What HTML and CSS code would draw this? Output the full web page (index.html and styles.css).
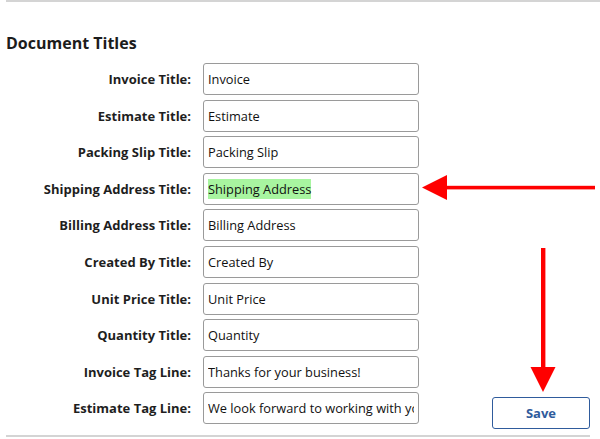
FILE: index.html
```html
<!DOCTYPE html>
<html lang="en">

<head>
    <meta charset="UTF-8">
    <meta name="viewport" content="width=device-width, initial-scale=1.0">
    <title>Document Titles</title>
    <link rel="stylesheet" href="styles.css">
</head>

<body>
    <div class="settings">
        <h2>Document Titles</h2>
        <div class="form-wrap">
            <div class="title-grid">
                <label for="invoice-title">Invoice Title:</label>
                <div class="field"><input type="text" id="invoice-title" value="Invoice"></div>

                <label for="estimate-title">Estimate Title:</label>
                <div class="field"><input type="text" id="estimate-title" value="Estimate"></div>

                <label for="packing-title">Packing Slip Title:</label>
                <div class="field"><input type="text" id="packing-title" value="Packing Slip"></div>

                <label for="shipping-title">Shipping Address Title:</label>
                <div class="field"><span class="selected">Shipping Address</span></div>

                <label for="billing-title">Billing Address Title:</label>
                <div class="field"><input type="text" id="billing-title" value="Billing Address"></div>

                <label for="created-title">Created By Title:</label>
                <div class="field"><input type="text" id="created-title" value="Created By"></div>

                <label for="price-title">Unit Price Title:</label>
                <div class="field"><input type="text" id="price-title" value="Unit Price"></div>

                <label for="qty-title">Quantity Title:</label>
                <div class="field"><input type="text" id="qty-title" value="Quantity"></div>

                <label for="invoice-tag">Invoice Tag Line:</label>
                <div class="field"><input type="text" id="invoice-tag" value="Thanks for your business!"></div>

                <label for="estimate-tag">Estimate Tag Line:</label>
                <div class="field"><input type="text" id="estimate-tag" value="We look forward to working with you!"></div>
            </div>
            <button class="save-btn">Save</button>
        </div>
    </div>

    <!-- annotation arrows -->
    <svg class="arrow arrow-left" width="180" height="30" viewBox="0 0 180 30">
        <polygon points="2,15.5 27,3 27,28" fill="#ff0000"/>
        <rect x="26" y="13.8" width="149" height="3.6" fill="#ff0000"/>
    </svg>
    <svg class="arrow arrow-down" width="30" height="146" viewBox="0 0 30 146">
        <rect x="13" y="0" width="4.4" height="121" fill="#ff0000"/>
        <polygon points="2.5,119 27.5,119 15,144" fill="#ff0000"/>
    </svg>
</body>

</html>
```

FILE: styles.css
```css
body {
    font-family: "Open Sans", Arial, sans-serif;
    margin: 0;
    padding: 0 0 0 6px;
    color: #222;
    background: #fff;
    position: relative;
}

.settings {
    border-top: 2px solid #d4d4d4;
}

h2 {
    font-size: 16px;
    font-weight: bold;
    margin: 0;
    padding-top: 30px;
    line-height: 22px;
    color: #1c1c1c;
}

.form-wrap {
    display: flex;
    justify-content: space-between;
    align-items: flex-end;
    margin-top: 9px;
    margin-right: 10px;
    padding-bottom: 6px;
    border-bottom: 2px solid #d4d4d4;
}

.title-grid {
    display: grid;
    grid-template-columns: 185px 216px;
    grid-auto-rows: 32px;
    column-gap: 12px;
    row-gap: 4.6px;
    padding-bottom: 5px;
}

.title-grid label {
    font-size: 13px;
    font-weight: bold;
    text-align: right;
    line-height: 32px;
    color: #1e1e1e;
}

.field,
.field input {
    box-sizing: border-box;
    height: 32px;
}

.field {
    border: 1px solid #9a9a9a;
    border-radius: 3px;
    padding: 0 4px;
    display: flex;
    align-items: center;
    overflow: hidden;
    white-space: nowrap;
    background: #fff;
}

.field input {
    border: none;
    outline: none;
    width: 100%;
    padding: 0;
    font-family: "Open Sans", Arial, sans-serif;
    font-size: 12.8px;
    color: #111;
    background: transparent;
}

.selected {
    font-size: 12.8px;
    color: #111;
    background: #a8f5a0;
    line-height: 20px;
}

.save-btn {
    width: 98px;
    height: 32px;
    background: #fff;
    border: 1px solid #2f5b9c;
    border-radius: 3px;
    color: #2f5b9c;
    font-family: "Open Sans", Arial, sans-serif;
    font-size: 13px;
    font-weight: bold;
    cursor: pointer;
}

.arrow {
    position: absolute;
}

.arrow-left {
    left: 420px;
    top: 172px;
}

.arrow-down {
    left: 527.5px;
    top: 248px;
}
```
